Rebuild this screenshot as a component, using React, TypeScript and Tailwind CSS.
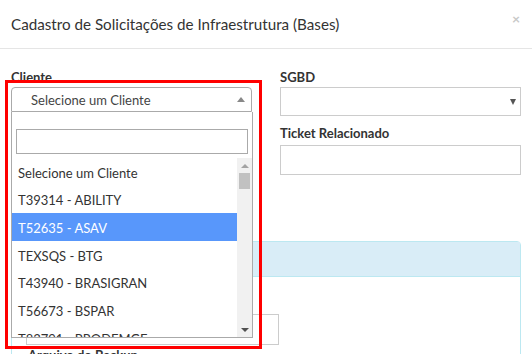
import React from "react";

const clientes = [
  "Selecione um Cliente",
  "T39314 - ABILITY",
  "T52635 - ASAV",
  "TEXSQS - BTG",
  "T43940 - BRASIGRAN",
  "T56673 - BSPAR",
  "T83791 - PRODEMGE",
];

function Scrollbar() {
  return (
    <div className="w-[15px] h-full bg-[#f1f1f1] flex flex-col items-center">
      <div className="h-[15px] w-full flex items-center justify-center">
        <div className="w-0 h-0 border-l-[4px] border-r-[4px] border-b-[4px] border-l-transparent border-r-transparent border-b-[#a3a3a3]" />
      </div>
      <div className="w-[11px] h-[16px] bg-[#c1c1c1]" />
      <div className="flex-1" />
      <div className="h-[15px] w-full flex items-center justify-center">
        <div className="w-0 h-0 border-l-[4px] border-r-[4px] border-t-[4px] border-l-transparent border-r-transparent border-t-[#505050]" />
      </div>
    </div>
  );
}

export default function App() {
  const selected = 2;

  return (
    <div className="relative w-[532px] h-[354px] overflow-hidden bg-white text-[#333] font-['Lato',sans-serif]">
      {/* header */}
      <div className="h-[49px] border-b border-[#e5e5e5] flex items-center justify-between pl-[11px] pr-[12px]">
        <h4 className="text-[15.2px] leading-none text-[#333] pt-[1px]">Cadastro de Solicitações de Infraestrutura (Bases)</h4>
        <span className="text-[#c8c8c8] text-[14px] font-bold leading-none -mt-[10px]">×</span>
      </div>

      {/* body */}
      <div className="px-[11px] pt-[22px]">
        <div className="flex gap-[28px]">
          <div className="w-[242px]">
            <label className="block text-[13px] font-bold leading-none mb-[3px]">Cliente</label>
            <div className="h-[25px] border border-[#aaa] rounded-t-[4px] flex items-center justify-between pl-[19px] pr-[6px] pt-[3px]">
              <span className="text-[13px] text-[#444]">Selecione um Cliente</span>
              <div className="w-0 h-0 border-l-[4px] border-r-[4px] border-b-[5px] border-l-transparent border-r-transparent border-b-[#888] -mt-[3px]" />
            </div>
          </div>
          <div className="w-[242px]">
            <label className="block text-[13px] font-bold leading-none mb-[3px]">SGBD</label>
            <div className="h-[29px] border border-[#ccc] flex items-center justify-end pr-[4px]">
              <div className="w-0 h-0 border-l-[3.5px] border-r-[3.5px] border-t-[6px] border-l-transparent border-r-transparent border-t-[#555]" />
            </div>
            <label className="block text-[13px] font-bold leading-none mt-[11px] mb-[5px]">Ticket Relacionado</label>
            <div className="h-[30px] border border-[#ccc]" />
          </div>
        </div>

        {/* panel */}
        <div className="mt-[66px] border border-[#bce8f1] rounded-t-[4px]">
          <div className="h-[35px] bg-[#d9edf7] border-b border-[#bce8f1]" />
          <div className="px-[14px] pt-[37px]">
            <div className="w-[253px] h-[31px] border border-[#ccc]" />
            <label className="block text-[13px] font-bold leading-none mt-[4px] ml-[2px]">Arquivo do Backup</label>
          </div>
        </div>
      </div>

      {/* open dropdown */}
      <div className="absolute left-[11px] top-[112px] w-[242px] h-[226px] bg-white border border-t-0 border-[#aaa] flex flex-col">
        <div className="px-[4px] pt-[17px] pb-[4px]">
          <div className="h-[25px] border border-[#aaa]" />
        </div>
        <div className="flex-1 flex min-h-0">
          <ul className="flex-1 overflow-hidden">
            {clientes.map((c, i) => (
              <li
                key={c}
                className={
                  i === selected
                    ? "h-[27.7px] flex items-center pl-[6px] pt-[3px] text-[13px] bg-[#5897fb] text-white"
                    : "h-[27.7px] flex items-center pl-[6px] pt-[3px] text-[13px] text-[#333]"
                }
              >
                {c}
              </li>
            ))}
          </ul>
          <Scrollbar />
        </div>
      </div>

      {/* highlight box */}
      <div className="absolute left-[5px] top-[80px] w-[257px] h-[269px] border-[3px] border-[#ff0000]" />
    </div>
  );
}
